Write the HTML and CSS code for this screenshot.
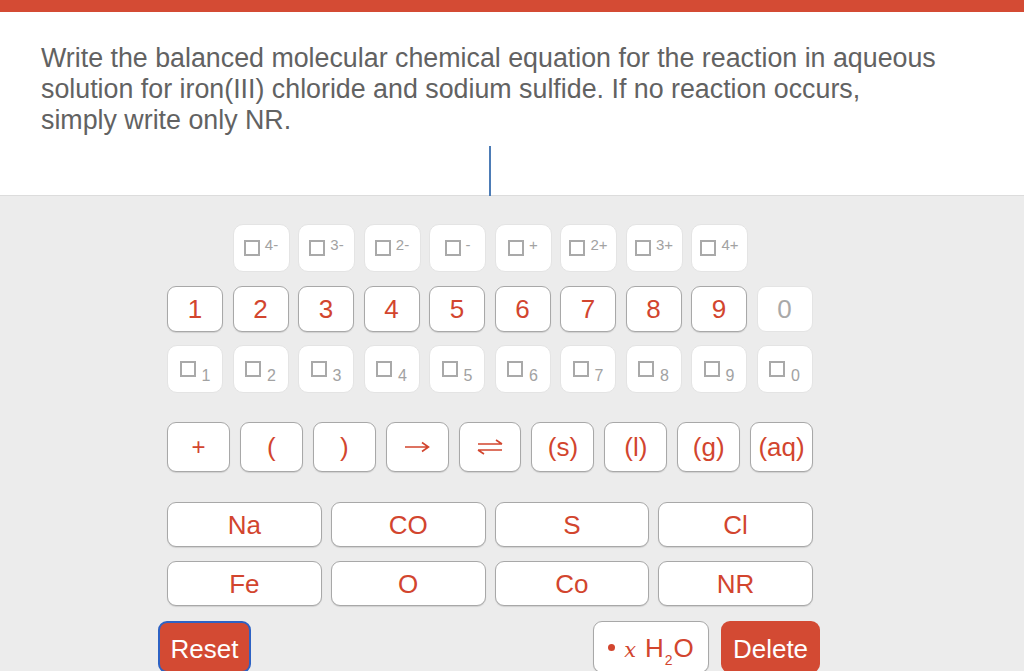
FILE: index.html
```html
<!DOCTYPE html>
<html lang="en">
<head>
<meta charset="utf-8">
<title>Chemical equation</title>
<link rel="stylesheet" href="styles.css">
</head>
<body>
<div class="topbar"></div>
<section class="question">
  <p class="prompt">Write the balanced molecular chemical equation for the reaction in aqueous solution for iron(III) chloride and sodium sulfide. If no reaction occurs, simply write only NR.</p>
  <div class="answer"><span class="cursor"></span></div>
</section>
<section class="keyboard">
  <div class="pad">
    <div class="grid10 row-charge">
      <button class="key ghost c2"><span class="tpl"><span class="sq"></span><span class="sup">4-</span></span></button>
      <button class="key ghost"><span class="tpl"><span class="sq"></span><span class="sup">3-</span></span></button>
      <button class="key ghost"><span class="tpl"><span class="sq"></span><span class="sup">2-</span></span></button>
      <button class="key ghost"><span class="tpl"><span class="sq"></span><span class="sup">-</span></span></button>
      <button class="key ghost"><span class="tpl"><span class="sq"></span><span class="sup">+</span></span></button>
      <button class="key ghost"><span class="tpl"><span class="sq"></span><span class="sup">2+</span></span></button>
      <button class="key ghost"><span class="tpl"><span class="sq"></span><span class="sup">3+</span></span></button>
      <button class="key ghost"><span class="tpl"><span class="sq"></span><span class="sup">4+</span></span></button>
    </div>
    <div class="grid10 row-num">
      <button class="key">1</button>
      <button class="key">2</button>
      <button class="key">3</button>
      <button class="key">4</button>
      <button class="key">5</button>
      <button class="key">6</button>
      <button class="key">7</button>
      <button class="key">8</button>
      <button class="key">9</button>
      <button class="key disabled">0</button>
    </div>
    <div class="grid10 row-sub">
      <button class="key ghost"><span class="tpl low"><span class="sq"></span><span class="sub">1</span></span></button>
      <button class="key ghost"><span class="tpl low"><span class="sq"></span><span class="sub">2</span></span></button>
      <button class="key ghost"><span class="tpl low"><span class="sq"></span><span class="sub">3</span></span></button>
      <button class="key ghost"><span class="tpl low"><span class="sq"></span><span class="sub">4</span></span></button>
      <button class="key ghost"><span class="tpl low"><span class="sq"></span><span class="sub">5</span></span></button>
      <button class="key ghost"><span class="tpl low"><span class="sq"></span><span class="sub">6</span></span></button>
      <button class="key ghost"><span class="tpl low"><span class="sq"></span><span class="sub">7</span></span></button>
      <button class="key ghost"><span class="tpl low"><span class="sq"></span><span class="sub">8</span></span></button>
      <button class="key ghost"><span class="tpl low"><span class="sq"></span><span class="sub">9</span></span></button>
      <button class="key ghost"><span class="tpl low"><span class="sq"></span><span class="sub">0</span></span></button>
    </div>
    <div class="grid9 row-sym">
      <button class="key plus">+</button>
      <button class="key">(</button>
      <button class="key">)</button>
      <button class="key"><svg class="arrow" width="26" height="12" viewBox="0 0 26 12"><path d="M1 6H24M18 1.5L24.5 6L18 10.5" fill="none" stroke="#d2452e" stroke-width="1.6"/></svg></button>
      <button class="key"><svg class="arrow" width="26" height="16" viewBox="0 0 26 16"><path d="M1 5H25M19 1L25 5M1 11H25M1 11L7 15" fill="none" stroke="#d2452e" stroke-width="1.6"/></svg></button>
      <button class="key">(s)</button>
      <button class="key">(l)</button>
      <button class="key">(g)</button>
      <button class="key">(aq)</button>
    </div>
    <div class="grid4 row-el1">
      <button class="key">Na</button>
      <button class="key">CO</button>
      <button class="key">S</button>
      <button class="key">Cl</button>
    </div>
    <div class="grid4 row-el2">
      <button class="key">Fe</button>
      <button class="key">O</button>
      <button class="key">Co</button>
      <button class="key">NR</button>
    </div>
    <div class="actions">
      <button class="key solid reset">Reset</button>
      <div class="right">
        <button class="key water"><span class="formula"><span class="dot"></span><i class="mx">x</i>H<sub class="h2">2</sub>O</span></button>
        <button class="key solid delete">Delete</button>
      </div>
    </div>
  </div>
</section>
</body>
</html>
```
FILE: styles.css
```css
html, body {
  margin: 0;
  padding: 0;
}
body {
  width: 1024px;
  height: 671px;
  overflow: hidden;
  background: #ececec;
  font-family: "Liberation Sans", Arial, sans-serif;
}
.topbar {
  height: 12px;
  background: #d44b34;
}
.question {
  background: #fff;
  height: 184px;
  box-sizing: border-box;
  padding: 31px 41px 0;
  border-bottom: 1px solid #dcdcdc;
}
.prompt {
  margin: 0;
  font-size: 26.8px;
  line-height: 31.2px;
  color: #626262;
  width: 900px;
}
.answer {
  width: 646px;
  margin: 9px 0 0 126px;
  display: flex;
  justify-content: center;
}
.cursor {
  display: block;
  width: 2px;
  height: 50px;
  background: #4d7cb6;
}
.keyboard {
  padding: 28px 0 0 167px;
}
.pad {
  width: 646px;
}
.grid10 {
  display: grid;
  grid-template-columns: repeat(10, 56px);
  column-gap: 9.5px;
}
.grid9 {
  display: grid;
  grid-template-columns: repeat(9, 1fr);
  column-gap: 10px;
}
.grid4 {
  display: grid;
  grid-template-columns: repeat(4, 1fr);
  column-gap: 9px;
}
.key {
  font-family: "Liberation Sans", Arial, sans-serif;
  font-size: 26px;
  color: #d2452e;
  background: #fff;
  border: 1px solid #a8a8a8;
  border-radius: 9px;
  box-shadow: 0 1px 1px rgba(0, 0, 0, 0.12);
  padding: 0;
  margin: 0;
  display: flex;
  align-items: center;
  justify-content: center;
  line-height: 1;
}
.key.plus {
  font-size: 24px;
}
.key.ghost {
  border-color: #e4e4e4;
  box-shadow: none;
  border-radius: 10px;
}
.key.disabled {
  color: #a9a9a9;
  border-color: #e4e4e4;
  box-shadow: none;
}
.row-charge { height: 48px; }
.row-charge .key { width: 57px; }
.c2 { grid-column-start: 2; }
.row-num { height: 46px; margin-top: 14px; }
.row-sub { height: 48px; margin-top: 13px; }
.row-sym { height: 50px; margin-top: 29px; }
.row-el1 { height: 45px; margin-top: 30px; }
.row-el2 { height: 45px; margin-top: 14px; }
.tpl {
  display: inline-flex;
  align-items: flex-start;
  color: #a2a2a2;
}
.tpl.low {
  align-items: flex-end;
}
.sq {
  display: block;
  width: 12px;
  height: 12px;
  border: 2px solid #a9a9a9;
}
.sup {
  font-size: 15px;
  line-height: 15px;
  margin: -3px 0 0 5px;
}
.sub {
  font-size: 16px;
  line-height: 16px;
  margin: 0 0 -7px 6px;
}
.arrow {
  display: block;
}
.actions {
  margin: 15px -7px 0 -9px;
  display: flex;
  justify-content: space-between;
  align-items: flex-start;
}
.right {
  display: flex;
  gap: 12px;
}
.key.solid {
  background: #d34a33;
  color: #fff;
  border: none;
  box-shadow: none;
  height: 52px;
  padding-top: 3px;
  box-sizing: border-box;
}
.reset {
  width: 93px;
  border: 2px solid #2d62c4 !important;
}
.delete {
  width: 99px;
}
.water {
  width: 116px;
  height: 52px;
  box-sizing: border-box;
  padding-top: 4px;
}
.formula {
  display: block;
  white-space: nowrap;
  line-height: 26px;
}
.dot {
  display: inline-block;
  width: 7px;
  height: 7px;
  border-radius: 50%;
  background: #d2452e;
  margin-right: 9px;
  vertical-align: 6px;
}
.mx {
  font-family: "DejaVu Serif", "Liberation Serif", serif;
  font-style: italic;
  font-size: 21px;
  margin-right: 9px;
}
.h2 {
  font-size: 14px;
  line-height: 0;
  vertical-align: -8px;
  margin: 0 1px;
}
```
